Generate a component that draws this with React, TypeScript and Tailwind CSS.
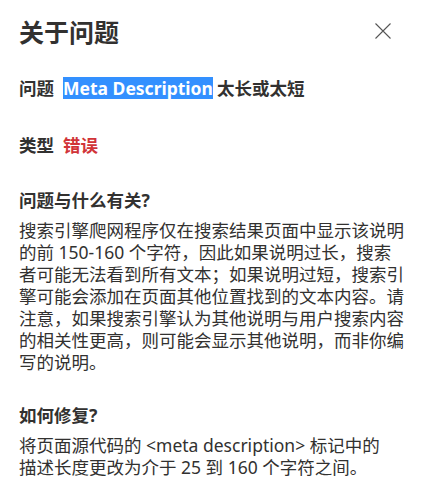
const font = { fontFamily: '"Noto Sans", "Noto Sans CJK SC", sans-serif' }

function CloseIcon() {
  return (
    <svg width="16" height="16" viewBox="0 0 16 16" className="text-[#555] mr-[13px] -mt-[2px]">
      <path d="M0.5 0.5 L15.5 15.5 M15.5 0.5 L0.5 15.5" stroke="currentColor" strokeWidth="1.1" fill="none" />
    </svg>
  )
}

export default function App() {
  return (
    <div className="w-[423px] h-[489px] bg-white text-[#323130] px-[19px] pt-4 overflow-hidden" style={font}>
      <div className="flex items-center justify-between h-8">
        <h1 className="text-[25px] leading-8 font-bold">关于问题</h1>
        <CloseIcon />
      </div>

      <div className="mt-[29px] flex items-center text-[17.5px] leading-[22px] font-bold">
        <span className="w-[44px]">问题</span>
        <span className="inline-block h-[22px] bg-[#3390ff] text-white">Meta Description</span>
        <span className="ml-1">太长或太短</span>
      </div>

      <div className="mt-[35px] flex items-center text-[17.5px] leading-[22px] font-bold">
        <span className="w-[44px]">类型</span>
        <span className="text-[#d13438]">错误</span>
      </div>

      <h2 className="mt-[33px] text-[17.5px] leading-[22px] font-bold">问题与什么有关?</h2>
      <p className="mt-2 text-[17.5px] leading-[22px]">
        搜索引擎爬网程序仅在搜索结果页面中显示该说明的前 150-160 个字符，因此如果说明过长，搜索者可能无法看到所有文本；如果说明过短，搜索引擎可能会添加在页面其他位置找到的文本内容。请注意，如果搜索引擎认为其他说明与用户搜索内容的相关性更高，则可能会显示其他说明，而非你编写的说明。
      </p>

      <h2 className="mt-[31px] text-[17.5px] leading-[22px] font-bold">如何修复?</h2>
      <p className="mt-2 text-[17.5px] leading-[22px]">
        将页面源代码的 &lt;meta description&gt; 标记中的
        <br />
        描述长度更改为介于 25 到 160 个字符之间。
      </p>
    </div>
  )
}
